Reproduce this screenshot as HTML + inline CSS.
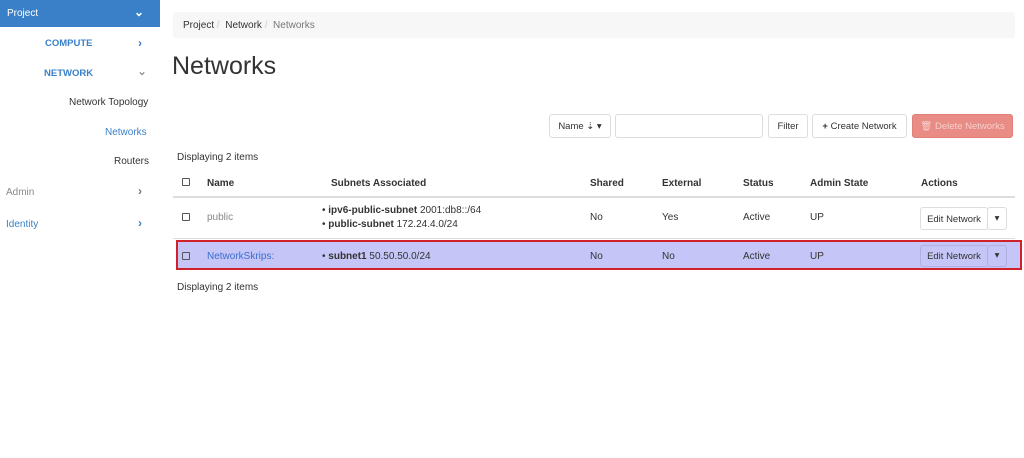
<!DOCTYPE html>
<html><head><style>
*{box-sizing:border-box;margin:0;padding:0}
body{width:1024px;height:458px;background:#fff;font-family:"Liberation Sans",sans-serif;font-size:10px;color:#333;position:relative;overflow:hidden}
.a{position:absolute;white-space:nowrap}
.side{position:absolute;left:0;top:0;width:160px;height:458px;background:#fff}
.proj{position:absolute;left:0;top:0;width:160px;height:27px;background:#3a80c8;color:#fff;font-size:10px;padding:8px 7px}
.chev{color:#3a80c8;font-weight:bold}
.btn{position:absolute;border:1px solid #ddd;border-radius:3px;background:#fff;font-size:9.5px;color:#333;text-align:center}
b{font-weight:bold}
</style></head><body>
<div class="side">
<div class="proj">Project</div>
<div class="a" style="left:134px;top:5px;color:#fff;font-size:12px;font-weight:bold">⌄</div>
<div class="a" style="left:45px;top:38px;color:#3a80c8;font-weight:bold;font-size:9.5px">COMPUTE</div>
<div class="a chev" style="left:138px;top:36px;font-size:12px">›</div>
<div class="a" style="left:44px;top:68px;color:#3a80c8;font-weight:bold;font-size:9.5px">NETWORK</div>
<div class="a" style="left:137px;top:64px;color:#777;font-size:12px">⌄</div>
<div class="a" style="left:69px;top:97px;color:#333">Network Topology</div>
<div class="a" style="left:105px;top:127px;color:#3a80c8">Networks</div>
<div class="a" style="left:114px;top:156px;color:#333">Routers</div>
<div class="a" style="left:6px;top:187px;color:#888">Admin</div>
<div class="a" style="left:138px;top:184px;color:#777;font-size:12px;font-weight:bold">›</div>
<div class="a" style="left:6px;top:219px;color:#3a80c8">Identity</div>
<div class="a chev" style="left:138px;top:216px;font-size:12px">›</div>
</div>
<div class="a" style="left:173px;top:12px;width:842px;height:26px;background:#f7f7f7;border-radius:3px"></div>
<div class="a" style="left:183px;top:20px;color:#333">Project <span style="color:#ccc">/</span> &nbsp;Network <span style="color:#ccc">/</span> &nbsp;<span style="color:#777">Networks</span></div>
<div class="a" style="left:172px;top:52px;font-size:25px;color:#333">Networks</div>
<div class="btn" style="left:549px;top:114px;width:62px;height:24px;padding-top:6px">Name ⇣ ▾</div>
<div class="btn" style="left:615px;top:114px;width:148px;height:24px"></div>
<div class="btn" style="left:768px;top:114px;width:40px;height:24px;padding-top:6px">Filter</div>
<div class="btn" style="left:812px;top:114px;width:95px;height:24px;padding-top:6px"><b>+</b> Create Network</div>
<div class="btn" style="left:912px;top:114px;width:101px;height:24px;padding-top:6px;background:#e88c85;border-color:#e08078;color:#f6cfcb">🗑 Delete Networks</div>
<div class="a" style="left:177px;top:152px">Displaying 2 items</div>
<div class="a" style="left:182px;top:178px;width:8px;height:8px;border:1px solid #555;border-radius:1px"></div>
<div class="a" style="left:207px;top:178px;font-weight:bold">Name</div>
<div class="a" style="left:331px;top:178px;font-weight:bold">Subnets Associated</div>
<div class="a" style="left:590px;top:178px;font-weight:bold">Shared</div>
<div class="a" style="left:662px;top:178px;font-weight:bold">External</div>
<div class="a" style="left:743px;top:178px;font-weight:bold">Status</div>
<div class="a" style="left:810px;top:178px;font-weight:bold">Admin State</div>
<div class="a" style="left:921px;top:178px;font-weight:bold">Actions</div>
<div class="a" style="left:173px;top:196px;width:842px;height:2px;background:#ddd"></div>
<div class="a" style="left:182px;top:213px;width:8px;height:8px;border:1px solid #555;border-radius:1px"></div>
<div class="a" style="left:207px;top:212px;color:#888">public</div>
<div class="a" style="left:322px;top:205px">• <b>ipv6-public-subnet</b> 2001:db8::/64</div>
<div class="a" style="left:322px;top:219px">• <b>public-subnet</b> 172.24.4.0/24</div>
<div class="a" style="left:590px;top:212px">No</div>
<div class="a" style="left:662px;top:212px">Yes</div>
<div class="a" style="left:743px;top:212px">Active</div>
<div class="a" style="left:810px;top:212px">UP</div>
<div class="btn" style="left:920px;top:207px;width:68px;height:23px;padding-top:6px">Edit Network</div>
<div class="btn" style="left:987px;top:207px;width:20px;height:23px;padding-top:5px">▾</div>
<div class="a" style="left:173px;top:238px;width:842px;height:1px;background:#ddd"></div>
<div class="a" style="left:176px;top:240px;width:846px;height:30px;background:#c5c5f7;border:2px solid #d0202a"></div>
<div class="a" style="left:182px;top:252px;width:8px;height:8px;border:1px solid #555;border-radius:1px"></div>
<div class="a" style="left:207px;top:251px;color:#3a6fd0">NetworkSkrips:</div>
<div class="a" style="left:322px;top:251px">• <b>subnet1</b> 50.50.50.0/24</div>
<div class="a" style="left:590px;top:251px">No</div>
<div class="a" style="left:662px;top:251px">No</div>
<div class="a" style="left:743px;top:251px">Active</div>
<div class="a" style="left:810px;top:251px">UP</div>
<div class="btn" style="left:920px;top:245px;width:68px;height:22px;padding-top:5px;background:#c5c5f7;border-color:#b0b0e0">Edit Network</div>
<div class="btn" style="left:987px;top:245px;width:20px;height:22px;padding-top:4px;background:#c5c5f7;border-color:#b0b0e0">▾</div>
<div class="a" style="left:177px;top:282px">Displaying 2 items</div>
</body></html>
